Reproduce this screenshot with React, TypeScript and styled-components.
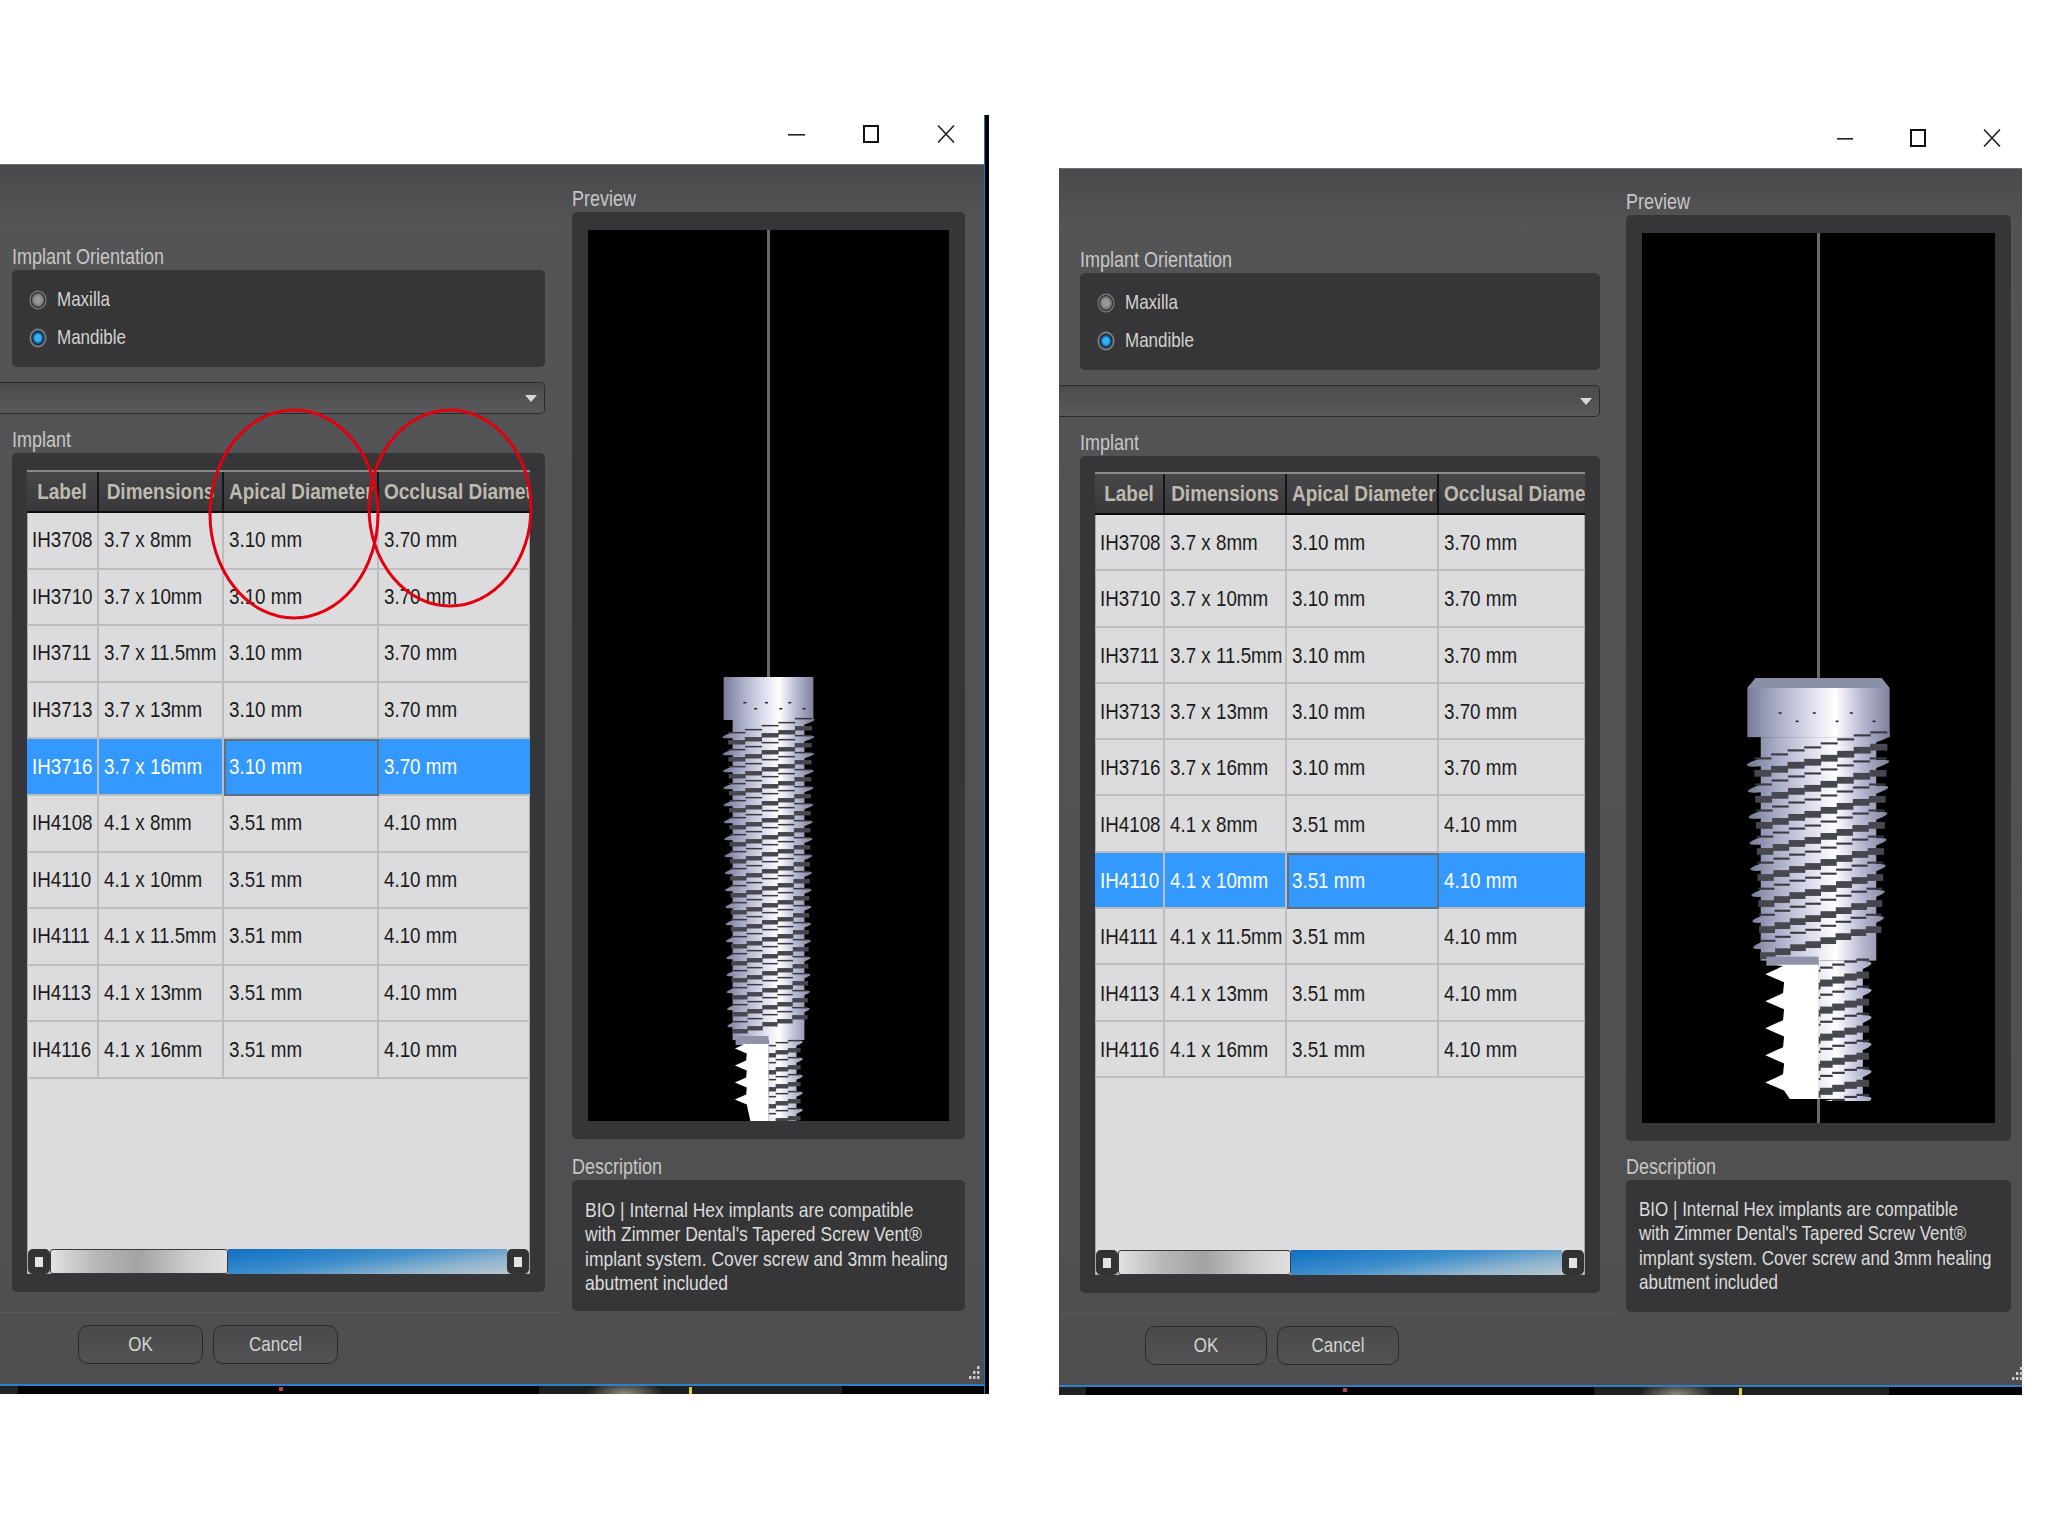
import React from "react";
import styled, { createGlobalStyle } from "styled-components";

const FONT = `"Liberation Sans", Arial, sans-serif`;

const Global = createGlobalStyle`
  html, body { margin: 0; padding: 0; background: #fff; }
  body { font-family: ${FONT}; }
  #root { width: 2048px; height: 1536px; overflow: hidden; }
`;

const Page = styled.div`
  display: flex;
  align-items: flex-start;
  width: 2048px;
  height: 1536px;
  background: #fff;
`;

const Window = styled.section<{ $top: number; $left: number; $width: number; $framed?: boolean }>`
  position: relative;
  flex: none;
  box-sizing: border-box;
  width: ${(p) => p.$width}px;
  margin-top: ${(p) => p.$top}px;
  margin-left: ${(p) => p.$left}px;
  border-right: ${(p) => (p.$framed ? "4px solid #000" : "none")};
`;

const WindowInner = styled.div<{ $framed?: boolean }>`
  border-right: ${(p) => (p.$framed ? "1px solid #1f72c4" : "none")};
`;

const TitleBar = styled.header<{ $height: number; $padTop: number; $padRight: number; $gap: number }>`
  box-sizing: border-box;
  display: flex;
  justify-content: flex-end;
  align-items: flex-start;
  height: ${(p) => p.$height}px;
  padding-top: ${(p) => p.$padTop}px;
  padding-right: ${(p) => p.$padRight}px;
  gap: ${(p) => p.$gap}px;
  background: #fff;
`;

const Body = styled.div`
  position: relative;
  border-top: 1px solid #6d6d6e;
  background: linear-gradient(180deg, #4a4a4c 0, #545456 60px, #4f4f51 100%);
`;

const Main = styled.div`
  display: flex;
  align-items: flex-start;
`;

const LeftCol = styled.div<{ $width: number; $padTop: number }>`
  box-sizing: border-box;
  flex: none;
  width: ${(p) => p.$width}px;
  margin-top: 60px;
  padding: ${(p) => p.$padTop}px 15px 20px 0;
  border-top: 1px solid #5a5a5c;
  border-bottom: 1px solid #5a5a5c;
`;

const RightCol = styled.div<{ $gap: number; $padRight: number; $padTop: number }>`
  flex: 1;
  min-width: 0;
  margin-left: ${(p) => p.$gap}px;
  margin-right: ${(p) => p.$padRight}px;
  padding-top: ${(p) => p.$padTop}px;
`;

const Label = styled.div<{ $inset?: number; $mt?: number }>`
  height: 24px;
  line-height: 24px;
  margin-left: ${(p) => p.$inset ?? 0}px;
  margin-top: ${(p) => p.$mt ?? 0}px;
  margin-bottom: 1px;
  font-size: 18px;
  color: #c6c6c6;
  white-space: nowrap;
  transform: scaleY(1.18);
`;

const Tall = styled.span`
  display: inline-block;
  transform: scaleY(1.18);
  white-space: nowrap;
`;

const Panel = styled.div<{ $inset?: number; $height: number }>`
  box-sizing: border-box;
  height: ${(p) => p.$height}px;
  margin-left: ${(p) => p.$inset ?? 0}px;
  background: #363638;
  border-radius: 5px;
`;

const RadioGroup = styled(Panel)`
  display: flex;
  flex-direction: column;
  justify-content: center;
  gap: 15px;
  padding: 1px 0 0 17px;
`;

const RadioRow = styled.div`
  display: flex;
  align-items: center;
  gap: 10px;
  height: 23px;
  font-size: 17px;
  color: #d2d2d2;
`;

const RadioDot = styled.span<{ $on?: boolean }>`
  flex: none;
  width: 18px;
  height: 20px;
  border-radius: 50%;
  background: ${(p) =>
    p.$on
      ? "radial-gradient(closest-side, #35aef2 0 34%, #0c5a92 52%, #1e2a33 68%, #8a8a8c 84%, #3c3c3e 100%)"
      : "radial-gradient(closest-side, #9a9a9a 0 30%, #747474 60%, #2c2c2d 74%, #828284 88%, #3c3c3e 100%)"};
`;

const Combo = styled.div`
  box-sizing: border-box;
  position: relative;
  height: 32px;
  margin-top: 15px;
  margin-bottom: 14px;
  border: 1px solid #2b2b2d;
  border-left: none;
  border-radius: 0 5px 5px 0;
  background: linear-gradient(180deg, #4b4b4d, #59595b);
  &::after {
    content: "";
    position: absolute;
    right: 7px;
    top: 12px;
    border-left: 6px solid transparent;
    border-right: 6px solid transparent;
    border-top: 7px solid #d8d8d8;
  }
`;

const TablePanel = styled(Panel)<{ $pad: number }>`
  display: flex;
  padding: ${(p) => p.$pad}px 15px 18px;
`;

const Table = styled.div`
  flex: 1;
  display: flex;
  flex-direction: column;
  min-width: 0;
  background: #dcdbdd;
  box-shadow: inset 0 0 0 1px #aaa;
`;

const Row = styled.div<{ $cols: string; $height: number; $selected?: boolean }>`
  display: grid;
  flex: none;
  grid-template-columns: ${(p) => p.$cols};
  height: ${(p) => p.$height}px;
  background: ${(p) => (p.$selected ? "#3399ff" : "transparent")};
  color: ${(p) => (p.$selected ? "#fff" : "#1b1b1b")};
`;

const HeaderRow = styled(Row)`
  background: linear-gradient(180deg, #47474a, #38383a);
  color: #bdbaae;
  border-top: 2px solid #8b8b8b;
  border-bottom: 2px solid #0c0c0c;
  box-sizing: border-box;
`;

const HeaderCell = styled.div<{ $center?: boolean }>`
  display: flex;
  align-items: center;
  justify-content: ${(p) => (p.$center ? "center" : "flex-start")};
  padding-left: ${(p) => (p.$center ? 0 : 5)}px;
  overflow: hidden;
  white-space: nowrap;
  font-size: 19px;
  font-weight: 700;
  border-right: 2px solid #161616;
  &:last-child { border-right: none; }
`;

const Cell = styled.div<{ $focus?: boolean; $shift: number }>`
  box-sizing: border-box;
  display: flex;
  align-items: center;
  padding: ${(p) => p.$shift}px 0 0 5px;
  white-space: nowrap;
  font-size: 18.8px;
  border-right: 2px solid #bdbdbd;
  border-bottom: 2px solid #bdbdbd;
  outline: ${(p) => (p.$focus ? "2px solid #5e6f82" : "none")};
  outline-offset: -2px;
  &:last-child { border-right: none; }
`;

const TableSpacer = styled.div`
  flex: 1;
`;

const ScrollBar = styled.div`
  display: flex;
  flex: none;
  height: 25px;
  padding: 0 1px;
`;

const ScrollBtn = styled.div<{ $width: number }>`
  display: flex;
  flex: none;
  align-items: center;
  justify-content: center;
  width: ${(p) => p.$width}px;
  background: #333335;
  border-radius: 5px;
  &::before {
    content: "";
    width: 8px;
    height: 10px;
    background: #e4e4e4;
  }
`;

const ScrollThumb = styled.div<{ $width: number }>`
  flex: none;
  width: ${(p) => p.$width}px;
  border: 1px solid #3a3a3c;
  border-radius: 3px;
  box-sizing: border-box;
  background: linear-gradient(90deg, #e2e2e2 0, #b8b8b8 25%, #a3a3a3 50%, #cfcfcf 80%, #e0e0e0 100%);
`;

const ScrollTrack = styled.div`
  flex: 1;
  background: linear-gradient(172deg, #0f6fc4 0, #3f8fcb 45%, #8fb4cf 75%, #b7c7cf 100%);
`;

const PreviewPanel = styled(Panel)<{ $padX: number }>`
  display: flex;
  padding: 18px ${(p) => p.$padX}px;
`;

const Viewport = styled.div`
  flex: 1;
  min-width: 0;
  display: flex;
  background: #000;
`;

const DescPanel = styled(Panel)<{ $padLeft: number; $font: number }>`
  padding: 18px 4px 0 ${(p) => p.$padLeft}px;
  font-size: ${(p) => p.$font}px;
  line-height: 24.4px;
  color: #dcdcdc;
`;

const DescLine = styled.div`
  white-space: nowrap;
  transform: scaleY(1.2);
`;

const Footer = styled.div<{ $padTop: number; $padLeft: number; $bottom: number }>`
  position: relative;
  display: flex;
  gap: 10px;
  padding: ${(p) => p.$padTop}px 0 ${(p) => p.$bottom}px ${(p) => p.$padLeft}px;
`;

const Button = styled.div<{ $width: number }>`
  box-sizing: border-box;
  display: flex;
  align-items: center;
  justify-content: center;
  width: ${(p) => p.$width}px;
  height: 39px;
  border: 1.5px solid #2a2a2c;
  border-radius: 10px;
  background: linear-gradient(180deg, #4a4a4c, #525254);
  color: #d4d4d4;
  font-size: 17px;
`;

const Grip = styled.svg<{ $right: number }>`
  position: absolute;
  right: ${(p) => p.$right}px;
  bottom: 3px;
`;

const BottomLine = styled.div`
  height: 1px;
  background: #2f7fc8;
  border-top: 1px solid #2f7fc8;
`;

const Strip = styled.div<{ $a: number; $b: number; $c: number; $glow: number }>`
  position: relative;
  height: 8px;
  background:
    radial-gradient(ellipse 38px 14px at ${(p) => p.$glow}px 100%, #8d8d80 0, rgba(120, 120, 110, 0) 100%),
    linear-gradient(90deg,
      #222 0 ${(p) => p.$a}px,
      #000 ${(p) => p.$a}px ${(p) => p.$b}px,
      #1f1f1f ${(p) => p.$b}px ${(p) => p.$c}px,
      #000 ${(p) => p.$c}px 100%);
`;

const StripMark = styled.span<{ $x: number; $color: string; $w: number; $h: number }>`
  position: absolute;
  left: ${(p) => p.$x}px;
  top: 1px;
  width: ${(p) => p.$w}px;
  height: ${(p) => p.$h}px;
  background: ${(p) => p.$color};
`;

const Annotations = styled.svg`
  position: absolute;
  left: 205px;
  top: 290px;
  overflow: visible;
  pointer-events: none;
`;

/* ---------- drawings ---------- */

const Minimize = ({ w }: { w: number }) => (
  <svg width={w} height="18" viewBox={`0 0 ${w} 18`}>
    <rect x="0" y="9" width={w} height="1.6" fill="#222" />
  </svg>
);
const Maximize = () => (
  <svg width="16" height="18" viewBox="0 0 16 18">
    <rect x="1" y="1" width="14" height="16" fill="none" stroke="#111" strokeWidth="2" />
  </svg>
);
const Close = () => (
  <svg width="18" height="18" viewBox="0 0 18 18">
    <path d="M1 0.5 L17 17.5 M17 0.5 L1 17.5" stroke="#1a1a1a" strokeWidth="1.5" fill="none" />
  </svg>
);

type ScrewSpec = {
  id: string;
  w: number;
  h: number;
  cx: number;
  top: number;
  hw: number;
  hwMid: number;
  hwLow: number;
  chamfer: number;
  collarEnd: number;
  threadEnd: number;
  pitch: number;
  rise: number;
  stepsN: number;
  shaftEnd: number;
  lowPitch: number;
  lowRise: number;
  tail: boolean;
};

function band(s: ScrewSpec, y: number, hw: number, pitch: number, rise: number, key: string, grad: string) {
  const x0 = s.cx - hw * 0.9;
  const span = hw * 1.86;
  const sw = span / s.stepsN;
  const thick = pitch * 0.26;
  const thin = Math.max(1.5, pitch * 0.08);
  const angle = (-Math.atan2(rise, 2 * hw) * 180) / Math.PI;
  const baseY = Math.round(y + rise / 2);
  const steps: React.ReactNode[] = [];
  for (let i = 0; i < s.stepsN; i++) {
    const dy = Math.round((i * rise) / s.stepsN);
    steps.push(
      <rect key={`d${i}`} x={x0 + i * sw} y={baseY - dy + pitch * 0.18} width={sw + 0.5} height={thick} fill="#47474f" />
    );
    steps.push(
      <rect key={`n${i}`} x={x0 + i * sw} y={baseY - dy - pitch * 0.3} width={sw + 0.5} height={thin} fill="#3a3a42" />
    );
  }
  return (
    <g key={key}>
      <ellipse cx={s.cx} cy={y} rx={hw + 2} ry={pitch * 0.26} fill={`url(#${grad})`} transform={`rotate(${angle} ${s.cx} ${y})`} />
      {steps}
    </g>
  );
}

function Screw({ s }: { s: ScrewSpec }) {
  const grad = `${s.id}-g`;
  const clip = `${s.id}-c`;
  const threads: React.ReactNode[] = [];
  const n = Math.floor((s.threadEnd - s.collarEnd) / s.pitch);
  for (let k = 0; k < n; k++) {
    const y = s.collarEnd + s.pitch * (k + 0.5);
    const hw = s.hw + ((s.hwMid - s.hw) * k) / n;
    threads.push(band(s, y, hw, s.pitch, s.rise, `t${k}`, grad));
  }
  const low: React.ReactNode[] = [];
  const jag: string[] = [`${s.cx},${s.threadEnd + 4}`, `${s.cx - s.hwLow * 0.85},${s.threadEnd + 4}`];
  const m = Math.floor((s.shaftEnd - s.threadEnd) / s.lowPitch) + 1;
  for (let k = 0; k < m; k++) {
    const y = s.threadEnd + s.lowPitch * (k + 0.5);
    low.push(band(s, y, s.hwLow, s.lowPitch, s.lowRise, `l${k}`, grad));
    if (y < s.shaftEnd - s.lowPitch * 0.4) {
      jag.push(`${s.cx - s.hwLow * 0.68},${y - s.lowPitch * 0.3}`);
      jag.push(`${s.cx - s.hwLow * 1.02},${y}`);
      jag.push(`${s.cx - s.hwLow * 0.66},${y + s.lowPitch * 0.3}`);
    }
  }
  jag.push(`${s.cx - s.hwLow * 0.55},${s.shaftEnd}`, `${s.cx},${s.shaftEnd}`);
  const collarHw = s.hw;
  return (
    <svg width="100%" height="100%" viewBox={`0 0 ${s.w} ${s.h}`} preserveAspectRatio="none">
      <defs>
        <linearGradient id={grad} x1={s.cx - s.hw} x2={s.cx + s.hw} y1="0" y2="0" gradientUnits="userSpaceOnUse">
          <stop offset="0" stopColor="#777b96" />
          <stop offset="0.18" stopColor="#a4a7c2" />
          <stop offset="0.42" stopColor="#d8d9ea" />
          <stop offset="0.62" stopColor="#ffffff" />
          <stop offset="0.8" stopColor="#b9bbd4" />
          <stop offset="1" stopColor="#80829c" />
        </linearGradient>
        <clipPath id={clip}>
          <rect x={s.cx} y="0" width={s.w} height={s.shaftEnd + 2} />
        </clipPath>
      </defs>
      <rect x={s.cx - 1.5} y="0" width="3" height={s.tail ? s.h : s.top} fill="#6a6a6a" />
      {s.chamfer > 0 && (
        <polygon
          points={`${s.cx - collarHw + 8},${s.top} ${s.cx + collarHw - 8},${s.top} ${s.cx + collarHw},${s.top + s.chamfer} ${s.cx - collarHw},${s.top + s.chamfer}`}
          fill="#8a8ea6"
        />
      )}
      <rect x={s.cx - collarHw} y={s.top + s.chamfer} width={collarHw * 2} height={s.collarEnd - s.top - s.chamfer} fill={`url(#${grad})`} />
      <rect x={s.cx - s.hwMid * 0.9} y={s.collarEnd} width={s.hwMid * 1.8} height={s.threadEnd - s.collarEnd} fill={`url(#${grad})`} />
      {[0.22, 0.34, 0.46, 0.62, 0.72, 0.88].map((f, i) => (
        <rect
          key={f}
          x={s.cx - collarHw + 2 * collarHw * f}
          y={s.collarEnd - (s.collarEnd - s.top) * (0.42 - (i % 2) * 0.14)}
          width="3"
          height="1.5"
          fill="#23232b"
        />
      ))}
      {threads}
      <rect x={s.cx} y={s.threadEnd} width={s.hwLow * 0.85} height={s.shaftEnd - s.threadEnd} fill={`url(#${grad})`} />
      <g clipPath={`url(#${clip})`}>{low}</g>
      <rect x={s.cx - s.hwLow} y={s.threadEnd - 4} width={s.hwLow} height={9} fill="#8f92a8" />
      <polygon points={jag.join(" ")} fill="#fff" />
    </svg>
  );
}

/* ---------- data ---------- */

const ROWS: [string, string, string, string][] = [
  ["IH3708", "3.7 x 8mm", "3.10 mm", "3.70 mm"],
  ["IH3710", "3.7 x 10mm", "3.10 mm", "3.70 mm"],
  ["IH3711", "3.7 x 11.5mm", "3.10 mm", "3.70 mm"],
  ["IH3713", "3.7 x 13mm", "3.10 mm", "3.70 mm"],
  ["IH3716", "3.7 x 16mm", "3.10 mm", "3.70 mm"],
  ["IH4108", "4.1 x 8mm", "3.51 mm", "4.10 mm"],
  ["IH4110", "4.1 x 10mm", "3.51 mm", "4.10 mm"],
  ["IH4111", "4.1 x 11.5mm", "3.51 mm", "4.10 mm"],
  ["IH4113", "4.1 x 13mm", "3.51 mm", "4.10 mm"],
  ["IH4116", "4.1 x 16mm", "3.51 mm", "4.10 mm"],
];

const DESC = [
  "BIO | Internal Hex implants are compatible",
  "with Zimmer Dental's Tapered Screw Vent®",
  "implant system. Cover screw and 3mm healing",
  "abutment included",
];

type Spec = {
  top: number;
  left: number;
  width: number;
  framed?: boolean;
  titleH: number;
  titlePad: number;
  titleRight: number;
  titleGap: number;
  minW: number;
  leftW: number;
  leftPad: number;
  rightTop: number;
  inset: number;
  orientH: number;
  tableH: number;
  tablePad: number;
  cols: string;
  rowH: number;
  cellShift: number;
  selected: number;
  btnW: number;
  thumbW: number;
  colGap: number;
  rightPad: number;
  previewH: number;
  previewPadX: number;
  descMt: number;
  descH: number;
  descPad: number;
  descFont: number;
  footTop: number;
  footLeft: number;
  footBottom: number;
  buttonW: number;
  gripRight: number;
  strip: { a: number; b: number; c: number; glow: number; pink: number; yellow: number };
  screw: ScrewSpec;
};

function DialogWindow({ c, children }: { c: Spec; children?: React.ReactNode }) {
  return (
    <Window $top={c.top} $left={c.left} $width={c.width} $framed={c.framed}>
      <WindowInner $framed={c.framed}>
        <TitleBar $height={c.titleH} $padTop={c.titlePad} $padRight={c.titleRight} $gap={c.titleGap}>
          <Minimize w={c.minW} />
          <Maximize />
          <Close />
        </TitleBar>
        <Body>
          <Main>
            <LeftCol $width={c.leftW} $padTop={c.leftPad}>
              <Label $inset={c.inset}>Implant Orientation</Label>
              <RadioGroup $inset={c.inset} $height={c.orientH}>
                <RadioRow>
                  <RadioDot />
                  <Tall>Maxilla</Tall>
                </RadioRow>
                <RadioRow>
                  <RadioDot $on />
                  <Tall>Mandible</Tall>
                </RadioRow>
              </RadioGroup>
              <Combo />
              <Label $inset={c.inset}>Implant</Label>
              <TablePanel $inset={c.inset} $height={c.tableH} $pad={c.tablePad}>
                <Table>
                  <HeaderRow $cols={c.cols} $height={43}>
                    <HeaderCell $center><Tall>Label</Tall></HeaderCell>
                    <HeaderCell $center><Tall>Dimensions</Tall></HeaderCell>
                    <HeaderCell><Tall>Apical Diameter</Tall></HeaderCell>
                    <HeaderCell><Tall>Occlusal Diameter</Tall></HeaderCell>
                  </HeaderRow>
                  {ROWS.map((r, i) => (
                    <Row key={r[0]} $cols={c.cols} $height={c.rowH} $selected={i === c.selected}>
                      <Cell $shift={c.cellShift}><Tall>{r[0]}</Tall></Cell>
                      <Cell $shift={c.cellShift}><Tall>{r[1]}</Tall></Cell>
                      <Cell $shift={c.cellShift} $focus={i === c.selected}><Tall>{r[2]}</Tall></Cell>
                      <Cell $shift={c.cellShift}><Tall>{r[3]}</Tall></Cell>
                    </Row>
                  ))}
                  <TableSpacer />
                  <ScrollBar>
                    <ScrollBtn $width={c.btnW} />
                    <ScrollThumb $width={c.thumbW} />
                    <ScrollTrack />
                    <ScrollBtn $width={c.btnW} />
                  </ScrollBar>
                </Table>
              </TablePanel>
            </LeftCol>
            <RightCol $gap={c.colGap} $padRight={c.rightPad} $padTop={c.rightTop}>
              <Label>Preview</Label>
              <PreviewPanel $height={c.previewH} $padX={c.previewPadX}>
                <Viewport>
                  <Screw s={c.screw} />
                </Viewport>
              </PreviewPanel>
              <Label $mt={c.descMt}>Description</Label>
              <DescPanel $height={c.descH} $padLeft={c.descPad} $font={c.descFont}>
                {DESC.map((l) => (
                  <DescLine key={l}>{l}</DescLine>
                ))}
              </DescPanel>
            </RightCol>
          </Main>
          <Footer $padTop={c.footTop} $padLeft={c.footLeft} $bottom={c.footBottom}>
            <Button $width={c.buttonW}><Tall>OK</Tall></Button>
            <Button $width={c.buttonW}><Tall>Cancel</Tall></Button>
            <Grip $right={c.gripRight} width="16" height="16" viewBox="0 0 16 16">
              {[
                [13, 1],
                [9, 6],
                [13, 6],
                [5, 11],
                [9, 11],
                [13, 11],
              ].map(([x, y]) => (
                <rect key={`${x}-${y}`} x={x} y={y} width="2.5" height="3" fill="#c8c8c8" />
              ))}
            </Grip>
          </Footer>
        </Body>
        <BottomLine />
        <Strip $a={c.strip.a} $b={c.strip.b} $c={c.strip.c} $glow={c.strip.glow}>
          <StripMark $x={c.strip.pink} $color="#b8405a" $w={4} $h={4} />
          <StripMark $x={c.strip.yellow} $color="#d8d23a" $w={3} $h={7} />
        </Strip>
      </WindowInner>
      {children}
    </Window>
  );
}

const LEFT: Spec = {
  top: 115, left: 0, width: 989, framed: true,
  titleH: 49, titlePad: 10, titleRight: 29, titleGap: 58, minW: 17,
  leftW: 560, leftPad: 19, rightTop: 22, inset: 12, orientH: 97, tableH: 839, tablePad: 17,
  cols: "72px 125px 155px 151px", rowH: 56.6, cellShift: 0, selected: 4, btnW: 22, thumbW: 178,
  colGap: 12, rightPad: 19, previewH: 927, previewPadX: 16,
  descMt: 16, descH: 131, descPad: 13, descFont: 17.5,
  footTop: 12, footLeft: 78, footBottom: 20, buttonW: 125, gripRight: 4,
  strip: { a: 18, b: 539, c: 842, glow: 625, pink: 279, yellow: 689 },
  screw: {
    id: "sa", w: 362, h: 891, cx: 181, top: 447, hw: 45, hwMid: 40, hwLow: 33, chamfer: 0,
    collarEnd: 490, threadEnd: 810, pitch: 17, rise: 17, stepsN: 5, shaftEnd: 891, lowPitch: 17, lowRise: 13, tail: false,
  },
};

const RIGHT: Spec = {
  top: 100, left: 70, width: 963,
  titleH: 68, titlePad: 29, titleRight: 21, titleGap: 57, minW: 16,
  leftW: 556, leftPad: 18, rightTop: 21, inset: 21, orientH: 97, tableH: 837, tablePad: 16,
  cols: "70px 122px 152px 146px", rowH: 56.3, cellShift: 2, selected: 6, btnW: 22, thumbW: 173,
  colGap: 11, rightPad: 11, previewH: 926, previewPadX: 16,
  descMt: 14, descH: 132, descPad: 13, descFont: 17,
  footTop: 12, footLeft: 86, footBottom: 20, buttonW: 122, gripRight: -1,
  strip: { a: 27, b: 535, c: 830, glow: 618, pink: 284, yellow: 680 },
  screw: {
    id: "sb", w: 352, h: 888, cx: 176, top: 444, hw: 71, hwMid: 64, hwLow: 52, chamfer: 10,
    collarEnd: 503, threadEnd: 726, pitch: 26, rise: 30, stepsN: 8, shaftEnd: 864, lowPitch: 27, lowRise: 22, tail: true,
  },
};

export default function App() {
  return (
    <Page>
      <Global />
      <DialogWindow c={LEFT}>
        <Annotations width="330" height="216" viewBox="0 0 330 216">
          <ellipse cx="89" cy="109" rx="84" ry="104" fill="none" stroke="#e0000f" strokeWidth="3" />
          <ellipse cx="245" cy="103" rx="81" ry="98" fill="none" stroke="#e0000f" strokeWidth="3" />
        </Annotations>
      </DialogWindow>
      <DialogWindow c={RIGHT} />
    </Page>
  );
}
